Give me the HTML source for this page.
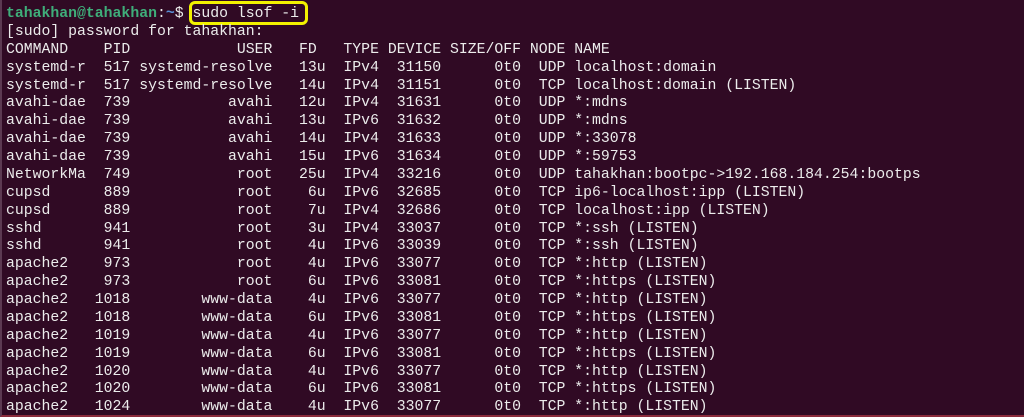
<!DOCTYPE html>
<html><head><meta charset="utf-8"><style>
html,body{margin:0;padding:0;}
body{width:1024px;height:417px;background:#300a24;overflow:hidden;position:relative;}
.frame{position:absolute;left:0;top:0;width:1022px;height:415px;border-left:2px solid #5c3a52;border-bottom:2px solid #8a2b3c;}
pre{position:absolute;left:6px;top:6px;margin:0;font-family:"Liberation Mono",monospace;font-size:14.8px;line-height:17.87px;color:#ececec;white-space:pre;}
.g{color:#3fae7a;font-weight:bold;}
.b{color:#5a8fd6;font-weight:bold;}
.box{position:absolute;left:189px;top:1px;width:113px;height:18px;border:3px solid #f2f200;border-radius:6px;}
</style></head><body>
<div class="frame"></div>
<div class="box"></div>
<pre><span class="g">tahakhan@tahakhan</span>:<span class="b">~</span>$ sudo lsof -i
[sudo] password for tahakhan:
COMMAND    PID            USER   FD   TYPE DEVICE SIZE/OFF NODE NAME
systemd-r  517 systemd-resolve   13u  IPv4  31150      0t0  UDP localhost:domain
systemd-r  517 systemd-resolve   14u  IPv4  31151      0t0  TCP localhost:domain (LISTEN)
avahi-dae  739           avahi   12u  IPv4  31631      0t0  UDP *:mdns
avahi-dae  739           avahi   13u  IPv6  31632      0t0  UDP *:mdns
avahi-dae  739           avahi   14u  IPv4  31633      0t0  UDP *:33078
avahi-dae  739           avahi   15u  IPv6  31634      0t0  UDP *:59753
NetworkMa  749            root   25u  IPv4  33216      0t0  UDP tahakhan:bootpc-&gt;192.168.184.254:bootps
cupsd      889            root    6u  IPv6  32685      0t0  TCP ip6-localhost:ipp (LISTEN)
cupsd      889            root    7u  IPv4  32686      0t0  TCP localhost:ipp (LISTEN)
sshd       941            root    3u  IPv4  33037      0t0  TCP *:ssh (LISTEN)
sshd       941            root    4u  IPv6  33039      0t0  TCP *:ssh (LISTEN)
apache2    973            root    4u  IPv6  33077      0t0  TCP *:http (LISTEN)
apache2    973            root    6u  IPv6  33081      0t0  TCP *:https (LISTEN)
apache2   1018        www-data    4u  IPv6  33077      0t0  TCP *:http (LISTEN)
apache2   1018        www-data    6u  IPv6  33081      0t0  TCP *:https (LISTEN)
apache2   1019        www-data    4u  IPv6  33077      0t0  TCP *:http (LISTEN)
apache2   1019        www-data    6u  IPv6  33081      0t0  TCP *:https (LISTEN)
apache2   1020        www-data    4u  IPv6  33077      0t0  TCP *:http (LISTEN)
apache2   1020        www-data    6u  IPv6  33081      0t0  TCP *:https (LISTEN)
apache2   1024        www-data    4u  IPv6  33077      0t0  TCP *:http (LISTEN)</pre>
</body></html>
